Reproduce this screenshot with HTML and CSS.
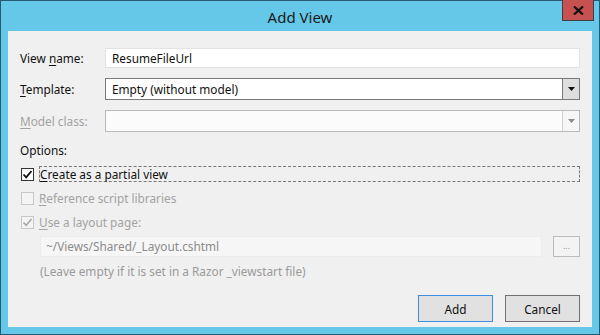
FILE: index.html
```html
<!DOCTYPE html>
<html>
<head>
<meta charset="utf-8">
<link rel="stylesheet" href="styles.css">
</head>
<body>
<div class="window">
  <div class="titlebar">
    <div class="title">Add View</div>
    <div class="close"><svg width="11" height="9" viewBox="0 0 11 9"><path d="M1 0.5 L10 8.5 M10 0.5 L1 8.5" stroke="#111" stroke-width="2.2"/></svg></div>
  </div>
  <div class="client">
    <div class="form">
      <div class="label">View <u>n</u>ame:</div>
      <div class="textbox">ResumeFileUrl</div>
      <div class="label"><u>T</u>emplate:</div>
      <div class="combo">
        <div class="combo-text">Empty (without model)</div>
        <div class="combo-btn"><svg width="7" height="4" viewBox="0 0 7 4"><path d="M0 0 H7 L3.5 4 Z" fill="#111"/></svg></div>
      </div>
      <div class="label disabled"><u>M</u>odel class:</div>
      <div class="combo combo-disabled">
        <div class="combo-text"></div>
        <div class="combo-btn"><svg width="7" height="4" viewBox="0 0 7 4"><path d="M0 0 H7 L3.5 4 Z" fill="#8a8a8a"/></svg></div>
      </div>
    </div>
    <div class="options">Options:</div>
    <div class="check-row">
      <div class="cb"><svg width="11" height="11" viewBox="0 0 11 11"><path d="M1.5 5.5 L4.2 8.3 L9.5 2" fill="none" stroke="#111" stroke-width="1.8"/></svg></div>
      <div class="focus"><u>C</u>reate as a partial view</div>
    </div>
    <div class="check-row disabled">
      <div class="cb cb-disabled"></div>
      <div class="cb-label"><u>R</u>eference script libraries</div>
    </div>
    <div class="check-row disabled">
      <div class="cb cb-disabled"><svg width="11" height="11" viewBox="0 0 11 11"><path d="M1.5 5.5 L4.2 8.3 L9.5 2" fill="none" stroke="#a8a8a8" stroke-width="1.6"/></svg></div>
      <div class="cb-label"><u>U</u>se a layout page:</div>
    </div>
    <div class="layout-row">
      <div class="path">~/Views/Shared/_Layout.cshtml</div>
      <div class="browse">...</div>
    </div>
    <div class="hint">(Leave empty if it is set in a Razor _viewstart file)</div>
    <div class="buttons">
      <div class="btn btn-default">Add</div>
      <div class="btn">Cancel</div>
    </div>
  </div>
</div>
</body>
</html>
```

FILE: styles.css
```css
html, body {
  margin: 0;
  padding: 0;
  background: #65c8e8;
}
body {
  font-family: "Segoe UI", "Noto Sans", "Open Sans", sans-serif;
  font-size: 11.8px;
  color: #111;
}
.window {
  width: 600px;
  height: 335px;
  box-sizing: border-box;
  background: #65c8e8;
  border: 1px solid #245a74;
  display: flex;
  flex-direction: column;
}
.titlebar {
  height: 30px;
  display: flex;
  position: relative;
  justify-content: center;
  align-items: center;
}
.title {
  font-size: 15px;
  color: #1a1a1a;
  margin-top: 1px;
}
.close {
  position: absolute;
  top: -1px;
  right: 5px;
  width: 32px;
  height: 21px;
  box-sizing: border-box;
  background: #c75050;
  border: 1px solid #3f3f3f;
  border-top: none;
  display: flex;
  align-items: center;
  justify-content: center;
}
.client {
  margin: 0 7px 7px 7px;
  flex: 1;
  background: #f0f0f0;
  padding: 17px 12px 0 12px;
  display: flex;
  flex-direction: column;
}
.form {
  display: grid;
  grid-template-columns: 85px 1fr;
  row-gap: 10px;
  align-items: center;
}
.label {
  color: #111;
}
.disabled, .disabled .cb-label {
  color: #a3a3a3;
}
.textbox {
  height: 20px;
  box-sizing: border-box;
  background: #fff;
  border: 1px solid #e3e3e3;
  padding: 0 6px;
  line-height: 18px;
}
.combo {
  height: 22px;
  box-sizing: border-box;
  border: 1px solid #7a7a7a;
  background: #fff;
  display: flex;
}
.combo-text {
  flex: 1;
  padding: 0 6px;
  line-height: 20px;
}
.combo-btn {
  width: 16px;
  background: #dedede;
  border-left: 1px solid #7a7a7a;
  display: flex;
  align-items: center;
  justify-content: center;
}
.combo-disabled {
  border-color: #b9b9b9;
  background: #fbfbfb;
}
.combo-disabled .combo-btn {
  background: #f6f6f6;
  border-left-color: #cfcfcf;
}
.options {
  margin-top: 10px;
  height: 16px;
  line-height: 16px;
}
.check-row {
  display: flex;
  align-items: center;
  height: 16px;
  margin-top: 8px;
}
.check-row + .check-row {
  margin-top: 8px;
}
.cb {
  width: 13px;
  height: 13px;
  box-sizing: border-box;
  border: 1px solid #333;
  background: #fff;
  margin-left: 1px;
  margin-right: 5px;
  display: flex;
  align-items: center;
  justify-content: center;
}
.cb-disabled {
  border-color: #c8c8c8;
  background: #f4f4f4;
}
.focus {
  flex: 1;
  height: 16px;
  box-sizing: border-box;
  border: 1px dashed #777;
  line-height: 14px;
  padding-left: 0;
}
.cb-label {
  line-height: 16px;
}
.layout-row {
  display: flex;
  margin-top: 6px;
  margin-left: 20px;
  height: 21px;
  gap: 11px;
}
.path {
  flex: 1;
  background: #f6f6f6;
  border: 1px solid #ececec;
  color: #8c8c8c;
  padding: 0 5px;
  line-height: 19px;
}
.browse {
  width: 27px;
  box-sizing: border-box;
  border: 1px solid #bcbcbc;
  background: #f3f3f3;
  color: #999;
  font-size: 9px;
  text-align: center;
  line-height: 17px;
}
.hint {
  margin-top: 6px;
  margin-left: 20px;
  color: #9a9a9a;
  line-height: 16px;
}
.buttons {
  display: flex;
  justify-content: flex-end;
  gap: 12px;
  margin-top: 16px;
}
.btn {
  width: 75px;
  height: 27px;
  box-sizing: border-box;
  border: 1px solid #707070;
  background: #e1e1e1;
  display: flex;
  align-items: center;
  justify-content: center;
}
.btn-default {
  border-color: #3c8fe0;
}
u {
  text-decoration: underline;
  text-underline-offset: 2px;
}
```
